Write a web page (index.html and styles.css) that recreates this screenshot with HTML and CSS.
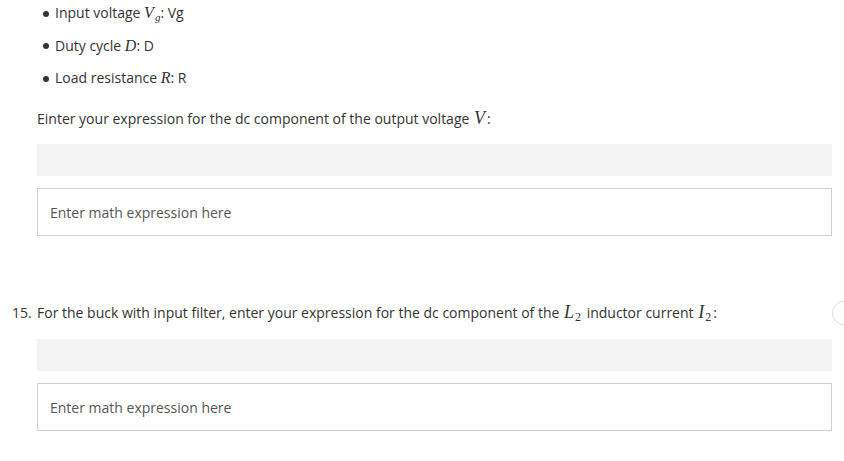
FILE: index.html
```html
<!DOCTYPE html>
<html>
<head>
<meta charset="utf-8">
<link rel="stylesheet" href="styles.css">
</head>
<body>
<div class="page">
  <div class="block">
    <ul class="vars">
      <li>Input voltage <span class="m">V<sub>g</sub></span>: Vg</li>
      <li>Duty cycle <span class="m">D</span>: D</li>
      <li>Load resistance <span class="m">R</span>: R</li>
    </ul>
    <p class="prompt">Einter your expression for the dc component of the output voltage <span class="m big">V</span>:</p>
    <div class="preview"></div>
    <div class="input">Enter math expression here</div>
  </div>

  <div class="question">
    <div class="qhead">
      <span class="num">15.</span>
      <span class="qtext">For the buck with input filter, enter your expression for the dc component of the <span class="m big">L<sub class="up">2</sub></span> inductor current <span class="m big">I<sub class="up">2</sub></span>:</span>
      <span class="status"></span>
    </div>
    <div class="block">
      <div class="preview second"></div>
      <div class="input">Enter math expression here</div>
    </div>
  </div>
</div>
</body>
</html>
```

FILE: styles.css
```css
html, body {
  margin: 0;
  padding: 0;
  background: #fff;
  overflow: hidden;
}
body {
  font-family: "Open Sans", "Noto Sans", sans-serif;
  font-size: 14px;
  color: #333;
}
.page {
  padding: 0 12px 0 12px;
}
.block {
  margin-left: 25px;
}
.vars {
  list-style: none;
  margin: -3px 0 0 0;
  padding: 0;
}
.vars li {
  position: relative;
  padding-left: 18px;
  height: 32.5px;
  line-height: 32.5px;
}
.vars li::before {
  content: "";
  position: absolute;
  left: 6px;
  top: 13.5px;
  width: 6px;
  height: 6px;
  border-radius: 50%;
  background: #333;
}
.m {
  font-family: "Liberation Serif", "DejaVu Serif", serif;
  font-style: italic;
  font-size: 16px;
}
.m sub {
  font-size: 11px;
  vertical-align: -3px;
  line-height: 0;
  margin-left: 1px;
}
.m sub.up {
  font-style: normal;
  font-size: 12px;
}
.big {
  font-size: 18px;
  margin: 0 2px 0 1px;
}
.prompt {
  margin: 13px 0 0 0;
  line-height: 20px;
}
.preview {
  margin-top: 15px;
  height: 32px;
  background: #f3f3f3;
}
.preview.second {
  margin-top: 16px;
}
.input {
  margin-top: 12px;
  height: 46px;
  border: 1px solid #cfcfd7;
  padding: 0 12px;
  line-height: 47px;
  color: #555;
}
.question {
  margin-top: 66px;
}
.qhead {
  position: relative;
  display: flex;
  line-height: 21px;
}
.num {
  width: 25px;
  flex: none;
}
.qtext {
  flex: 1;
}
.status {
  position: absolute;
  left: 100%;
  top: -1px;
  width: 22px;
  height: 22px;
  border: 1px solid #ddd;
  border-radius: 50%;
  background: #fff;
}
```
